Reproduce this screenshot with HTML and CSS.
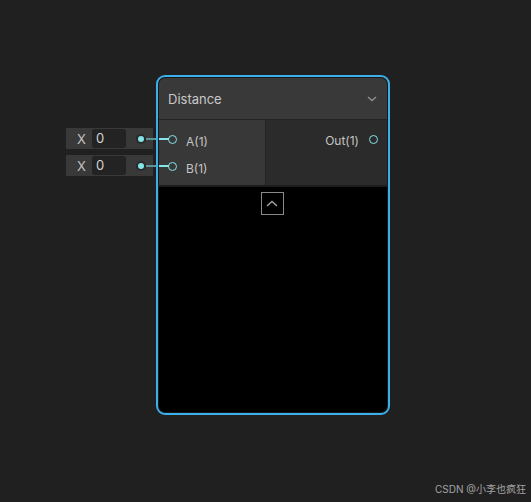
FILE: index.html
```html
<!DOCTYPE html>
<html>
  <head>
    <meta charset="utf-8">
    <title>Distance Node</title>
    <link rel="stylesheet" href="styles.css">
  </head>
  <body>
    <div id="graph">

      <!--inline input fields-->
      <div class="field field-a">
        <span class="fieldLabel">X</span>
        <span class="fieldBox">0</span>
        <span class="fieldDot"></span>
        <span class="fieldEdge"></span>
      </div>
      <div class="field field-b">
        <span class="fieldLabel">X</span>
        <span class="fieldBox">0</span>
        <span class="fieldDot"></span>
        <span class="fieldEdge"></span>
      </div>

      <!--node-->
      <div class="node">
        <div class="nodeInner">
          <div class="nodeHeader">
            <span class="nodeTitle">Distance</span>
            <svg class="chevron" width="10" height="6" viewBox="0 0 10 6">
              <path d="M1 1 L5 4.5 L9 1" fill="none" stroke="#8f8f8f" stroke-width="1.4"/>
            </svg>
          </div>
          <div class="nodePorts">
            <div class="inputs">
              <div class="portRow">
                <span class="port inPort"></span>
                <span class="portName">A(1)</span>
              </div>
              <div class="portRow">
                <span class="port inPort"></span>
                <span class="portName">B(1)</span>
              </div>
            </div>
            <div class="outputs">
              <div class="portRow outRow">
                <span class="portName">Out(1)</span>
                <span class="port"></span>
              </div>
            </div>
          </div>
          <div class="preview">
            <div class="collapseBtn">
              <svg width="12" height="7" viewBox="0 0 12 7">
                <path d="M1 6 L6 1.5 L11 6" fill="none" stroke="#a0a0a0" stroke-width="1.5"/>
              </svg>
            </div>
          </div>
        </div>
      </div>

      <div class="watermark">CSDN @小李也疯狂</div>
    </div>
  </body>
</html>
```

FILE: styles.css
```css
html,body{
  margin: 0px;
  padding: 0px;
  width: 100%;
  height: 100%;
  overflow: hidden;
  font-family: Inter, "Noto Sans", "Noto Sans CJK SC", sans-serif;
}

body{
  background-color: #202020;
}

#graph{
  position: relative;
  width: 531px;
  height: 502px;
}

/* inline fields left of node */
.field{
  position: absolute;
  left: 66px;
  width: 87px;
  height: 21px;
  box-sizing: border-box;
  background-color: #393939;
  display: flex;
  align-items: center;
  padding-left: 11px;
}
.field-a{ top: 128px; }
.field-b{ top: 155px; }

.fieldLabel{
  color: #c4c4c4;
  font-size: 13px;
  width: 15px;
}

.fieldBox{
  width: 34px;
  height: 19px;
  box-sizing: border-box;
  background-color: #232323;
  border-radius: 3px;
  color: #d4d4d4;
  font-size: 13px;
  line-height: 19px;
  padding-left: 4px;
}

.fieldDot{
  width: 6px;
  height: 6px;
  margin-left: 12px;
  border-radius: 50%;
  background-color: #84e4e7;
  box-shadow: 0 0 0 2px #2a2a2a;
}

.fieldEdge{
  position: absolute;
  left: 80px;
  top: 10px;
  width: 10px;
  height: 2px;
  background-color: #5a9498;
}

/* node */
.node{
  position: absolute;
  left: 156px;
  top: 75px;
  width: 234px;
  height: 340px;
  box-sizing: border-box;
  border: 2px solid #3caeea;
  border-radius: 9px;
  background-color: #191919;
  padding: 1px;
}

.nodeInner{
  height: 100%;
  border-radius: 6px;
  overflow: hidden;
  display: flex;
  flex-direction: column;
  background-color: #000;
}

.nodeHeader{
  height: 41px;
  flex: none;
  background-color: #393939;
  border-bottom: solid 1px #242424;
  display: flex;
  align-items: center;
  justify-content: space-between;
  padding: 0px 10px 0px 9px;
}

.nodeTitle{
  color: #c8c8c8;
  font-size: 13px;
  margin-top: 1px;
}

.nodePorts{
  height: 65px;
  flex: none;
  display: flex;
  border-bottom: solid 2px #1c1c1c;
}

.inputs{
  width: 106px;
  background-color: #383838;
  border-right: solid 1px #242424;
  padding-top: 6px;
}

.outputs{
  flex: 1;
  background-color: #2b2b2b;
  padding-top: 6px;
}

.portRow{
  height: 27px;
  display: flex;
  align-items: center;
  gap: 9px;
  padding-left: 9px;
}

.outRow{
  justify-content: flex-end;
  padding-left: 0px;
  padding-right: 9px;
  gap: 10px;
}

.portName{
  color: #c4c4c4;
  font-size: 12px;
  margin-top: 3px;
}

.outRow .portName{
  margin-top: 1px;
}

.port{
  position: relative;
  width: 9px;
  height: 9px;
  box-sizing: border-box;
  border: solid 1.7px #84e4e7;
  border-radius: 50%;
}

.inPort::before{
  content: "";
  position: absolute;
  right: 100%;
  top: 2px;
  width: 11px;
  height: 2px;
  background-color: #84e4e7;
}

.preview{
  flex: 1;
  display: flex;
  justify-content: center;
  padding-top: 5px;
}

.collapseBtn{
  width: 23px;
  height: 23px;
  box-sizing: border-box;
  border: solid 1px #8a8a8a;
  display: flex;
  align-items: center;
  justify-content: center;
  margin-right: 2px;
}

.watermark{
  position: absolute;
  right: 5px;
  bottom: 6px;
  color: #a4a4a4;
  font-size: 10px;
}
```
